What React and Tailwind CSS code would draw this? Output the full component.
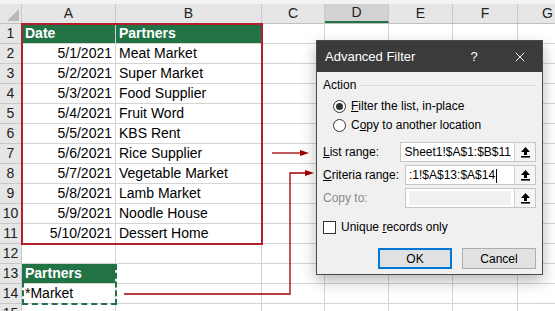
import { X } from 'lucide-react';

const COLS = [
  { key: 'A', w: 'w-[94px]' },
  { key: 'B', w: 'w-[146px]' },
  { key: 'C', w: 'w-[63px]' },
  { key: 'D', w: 'w-[64px]' },
  { key: 'E', w: 'w-[64px]' },
  { key: 'F', w: 'w-[65px]' },
  { key: 'G', w: 'w-[60px]' },
];

const DATA = [
  ['5/1/2021', 'Meat Market'],
  ['5/2/2021', 'Super Market'],
  ['5/3/2021', 'Food Supplier'],
  ['5/4/2021', 'Fruit Word'],
  ['5/5/2021', 'KBS Rent'],
  ['5/6/2021', 'Rice Supplier'],
  ['5/7/2021', 'Vegetable Market'],
  ['5/8/2021', 'Lamb Market'],
  ['5/9/2021', 'Noodle House'],
  ['5/10/2021', 'Dessert Home'],
];

function RowHead({ n }) {
  return (
    <div className="w-[22px] shrink-0 h-full bg-[#e6e6e6] border-r border-b border-[#c8c8c8] flex items-center justify-center text-[#222]">
      {n}
    </div>
  );
}

function Cell({ w, className = '', children }) {
  return (
    <div className={`${w} shrink-0 h-full border-r border-b border-[#d4d4d4] flex items-center px-[3px] whitespace-nowrap ${className}`}>
      {children}
    </div>
  );
}

function Empty({ from = 0 }) {
  return COLS.slice(from).map((c) => <Cell key={c.key} w={c.w} />);
}

function UpBtn() {
  return (
    <div className="w-[21px] h-full border-l border-[#d0d0d0] bg-[#f5f5f5] flex items-center justify-center">
      <svg width="11" height="12" viewBox="0 0 11 12">
        <path d="M5.5 1 L10 6 L7 6 L7 9 L4 9 L4 6 L1 6 Z" fill="#000" />
        <rect x="1" y="10" width="9" height="1.6" fill="#000" />
      </svg>
    </div>
  );
}

function RangeField({ label, value, disabled, caret }) {
  return (
    <div className="flex items-center h-[20px]">
      <div className={`w-[82px] ${disabled ? 'text-[#8a8a8a]' : 'text-black'}`}>{label}</div>
      <div className="flex-1 h-full flex border border-[#c6c6c6] bg-white">
        <div className="flex-1 flex items-center px-[3px] text-black">
          {disabled ? <div className="w-full h-[14px] bg-[#f0f0f0]" /> : (
            <span>{value}{caret && <span className="inline-block w-px h-[14px] bg-black align-middle ml-px" />}</span>
          )}
        </div>
        <UpBtn />
      </div>
    </div>
  );
}

export default function App() {
  return (
    <div className="relative w-[555px] h-[311px] overflow-hidden bg-white text-[14px] text-black font-['Liberation_Sans',Arial,sans-serif]">
      {/* column header strip */}
      <div className="h-[4px] bg-[#f3f3f3]" />
      <div className="flex h-[20px] bg-[#e6e6e6] border-b border-[#c0c0c0]">
        <div className="w-[22px] shrink-0 border-r border-[#c8c8c8] relative">
          <div className="absolute right-[2px] bottom-[2px] w-0 h-0 border-l-[12px] border-l-transparent border-b-[12px] border-b-[#b8b8b8]" />
        </div>
        {COLS.map((c) => (
          <div
            key={c.key}
            className={`${c.w} shrink-0 border-r border-[#c8c8c8] flex items-center justify-center text-[#222] ${c.key === 'D' ? 'bg-[#d2d2d2] border-b-2 border-b-[#217346] text-[#1e5e38]' : ''}`}
          >
            {c.key}
          </div>
        ))}
      </div>

      {/* row 1 */}
      <div className="flex h-[20px]">
        <RowHead n={1} />
        <Cell w="w-[94px]" className="bg-[#217346] text-white font-bold border-[#8c8c8c]">Date</Cell>
        <Cell w="w-[146px]" className="bg-[#217346] text-white font-bold border-[#8c8c8c]">Partners</Cell>
        <Empty from={2} />
      </div>
      {DATA.map(([d, p], i) => (
        <div key={d} className="flex h-[20px]">
          <RowHead n={i + 2} />
          <Cell w="w-[94px]" className="justify-end border-[#9a9a9a]">{d}</Cell>
          <Cell w="w-[146px]" className="border-[#9a9a9a]">{p}</Cell>
          <Empty from={2} />
        </div>
      ))}
      <div className="flex h-[20px]">
        <RowHead n={12} />
        <Empty />
      </div>
      <div className="flex h-[20px]">
        <RowHead n={13} />
        <Cell w="w-[94px]" className="bg-[#217346] text-white font-bold border-[#8c8c8c]">Partners</Cell>
        <Empty from={1} />
      </div>
      <div className="flex h-[20px]">
        <RowHead n={14} />
        <Cell w="w-[94px]" className="border-[#9a9a9a]">*Market</Cell>
        <Empty from={1} />
      </div>
      <div className="flex h-[20px]">
        <RowHead n={15} />
        <Empty />
      </div>

      {/* list range outline */}
      <div className="absolute left-[21px] top-[23px] w-[242px] h-[222px] border-2 border-[#b0202a] pointer-events-none" />
      {/* criteria marching ants */}
      <div className="absolute left-[22px] top-[264px] w-[95px] h-[41px] border-2 border-dashed border-[#217346] pointer-events-none" />

      {/* arrows */}
      <svg className="absolute left-0 top-0" width="555" height="311">
        <path d="M272 153 H302" stroke="#a00000" strokeWidth="1.3" fill="none" />
        <path d="M309 153 L300 150 L300 156 Z" fill="#a00000" />
        <path d="M124 294 H290 V173 H307" stroke="#a00000" strokeWidth="1.3" fill="none" />
        <path d="M314 173 L305 170 L305 176 Z" fill="#a00000" />
      </svg>

      {/* Advanced Filter dialog */}
      <div className="absolute left-[316px] top-[40px] w-[227px] h-[235px] border border-[#4a4a4a] bg-[#f0f0f0] shadow-[0_6px_14px_rgba(0,0,0,0.28)] flex flex-col text-[12px] font-['Liberation_Sans',Arial,sans-serif]">
        <div className="h-[31px] bg-[#3b3b3b] flex items-center text-white text-[13px] pl-[8px]">
          <span className="flex-1">Advanced Filter</span>
          <span className="w-[20px] text-center mr-[28px]">?</span>
          <X size={16} strokeWidth={1.4} className="mr-[14px]" />
        </div>
        <div className="flex flex-col px-[6px] pt-[6px]">
          <div className="flex items-center gap-[4px] h-[14px]">
            <span>Action</span>
            <div className="flex-1 h-px bg-[#dcdcdc]" />
          </div>
          <div className="flex flex-col pl-[10px] mt-[7px] gap-[5px]">
            <div className="flex items-center gap-[5px] h-[14px]">
              <div className="w-[13px] h-[13px] rounded-full border border-[#333] bg-white flex items-center justify-center">
                <div className="w-[7px] h-[7px] rounded-full bg-[#333]" />
              </div>
              <span><u>F</u>ilter the list, in-place</span>
            </div>
            <div className="flex items-center gap-[5px] h-[14px]">
              <div className="w-[13px] h-[13px] rounded-full border border-[#333] bg-white" />
              <span>C<u>o</u>py to another location</span>
            </div>
          </div>
          <div className="flex flex-col gap-[3px] mt-[10px]">
            <RangeField label={<span><u>L</u>ist range:</span>} value="Sheet1!$A$1:$B$11" />
            <RangeField label={<span><u>C</u>riteria range:</span>} value=":1!$A$13:$A$14" caret />
            <RangeField label="Copy to:" disabled />
          </div>
          <div className="flex items-center gap-[5px] mt-[12px] h-[14px]">
            <div className="w-[13px] h-[13px] border border-[#333] bg-white" />
            <span>Unique <u>r</u>ecords only</span>
          </div>
          <div className="flex justify-end gap-[10px] mt-[14px]">
            <div className="w-[74px] h-[21px] border-2 border-[#0078d7] bg-[#e1e1e1] flex items-center justify-center">OK</div>
            <div className="w-[74px] h-[21px] border border-[#adadad] bg-[#e1e1e1] flex items-center justify-center">Cancel</div>
          </div>
        </div>
      </div>
    </div>
  );
}
